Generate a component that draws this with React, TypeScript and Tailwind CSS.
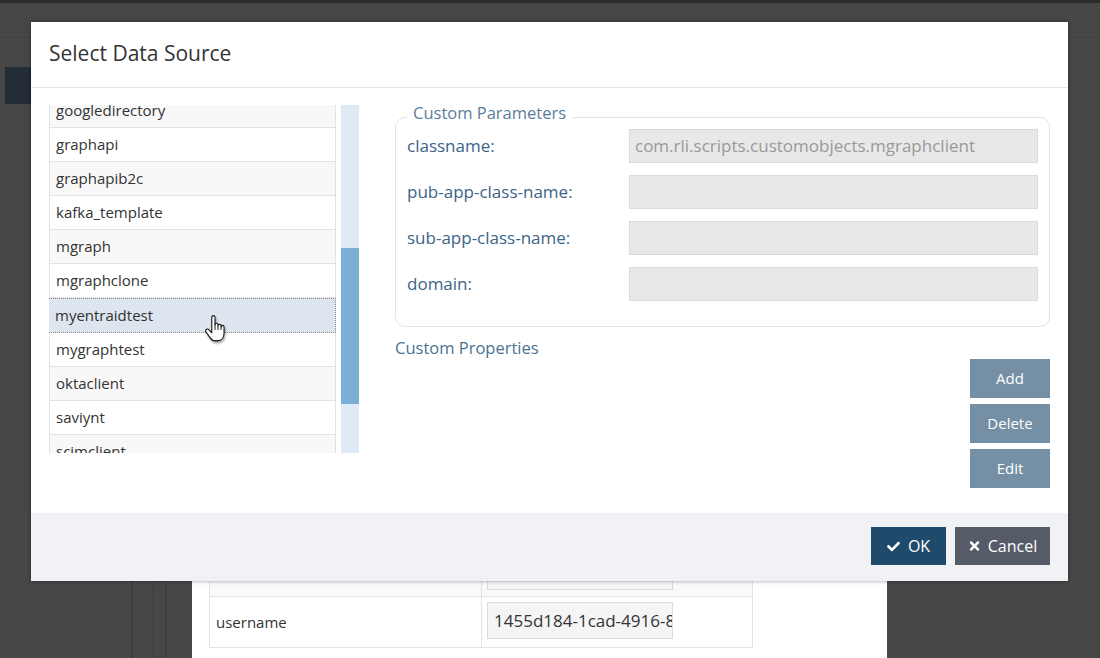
import React from "react";
import { FaCheck, FaTimes } from "react-icons/fa";

const items = [
  "googledirectory",
  "graphapi",
  "graphapib2c",
  "kafka_template",
  "mgraph",
  "mgraphclone",
  "myentraidtest",
  "mygraphtest",
  "oktaclient",
  "saviynt",
  "scimclient",
];

const params: { label: string; value: string }[] = [
  { label: "classname:", value: "com.rli.scripts.customobjects.mgraphclient" },
  { label: "pub-app-class-name:", value: "" },
  { label: "sub-app-class-name:", value: "" },
  { label: "domain:", value: "" },
];

function HandCursor() {
  return (
    <svg width="22" height="28" viewBox="0 0 20 26" className="drop-shadow-[1px_2px_1px_rgba(0,0,0,0.35)]">
      <path
        d="M7 2.2C7 1.3 7.6 0.6 8.5 0.6C9.4 0.6 10 1.3 10 2.2V9C10 8.2 10.6 7.6 11.4 7.6C12.2 7.6 12.8 8.2 12.8 9V10C12.8 9.2 13.4 8.6 14.2 8.6C15 8.6 15.6 9.2 15.6 10V11C15.6 10.2 16.2 9.6 17 9.6C17.8 9.6 18.4 10.2 18.4 11V17C18.4 21 16 24 12 24H10.5C8 24 6.8 23 5.5 21.2L1.6 15.6C1 14.8 1.2 13.8 2 13.3C2.8 12.8 3.8 13 4.4 13.8L7 16.5Z"
        fill="#ffffff"
        stroke="#111111"
        strokeWidth="1"
        strokeLinejoin="round"
      />
      <path d="M10 9V13.5M12.8 10V13.5M15.6 11V13.5" stroke="#111111" strokeWidth="0.9" strokeLinecap="round" fill="none" />
    </svg>
  );
}

export default function App() {
  return (
    <div
      className="relative w-[1100px] h-[658px] overflow-hidden bg-[#474747] flex flex-col"
      style={{ fontFamily: '"Open Sans", "Noto Sans", sans-serif' }}
    >
      {/* background page */}
      <div className="h-[3px] bg-[#2b2b2b] shrink-0" />
      <div className="h-[35px] border-b border-[#3f3f3f] shrink-0" />
      <div className="h-[29px] shrink-0" />
      <div className="ml-[5px] w-[40px] h-[37px] bg-[#222d38] shrink-0" />
      <div className="flex-1" />
      <div className="flex h-[77px] shrink-0">
        <div className="w-[192px] flex">
          <div className="w-[131px]" />
          <div className="w-[2px] bg-[#3e3e3e]" />
          <div className="w-[19px]" />
          <div className="w-[2px] bg-[#424242]" />
          <div className="w-[11px]" />
          <div className="w-[2px] bg-[#3f3f3f]" />
        </div>
        <div className="w-[695px] bg-white flex flex-col justify-end px-[17px] pb-[10px] overflow-hidden">
          <div className="w-[544px] border border-[#e3e3e3] shrink-0">
            <div className="flex h-[50px] bg-[#f9f9f9] border-b border-[#e3e3e3]">
              <div className="w-[272px] border-r border-[#e3e3e3]" />
              <div className="flex-1 pl-[5px] pt-[6px]">
                <div className="w-[186px] h-[37px] border border-[#dcdcdc] bg-[#f5f5f5]" />
              </div>
            </div>
            <div className="flex h-[50px] bg-white">
              <div className="w-[272px] border-r border-[#e3e3e3] flex items-center pl-[6px] text-[15px] text-[#333]">
                username
              </div>
              <div className="flex-1 pl-[5px] pt-[5px]">
                <div className="w-[186px] h-[37px] border border-[#dcdcdc] bg-[#f5f5f5] flex items-center pl-[6px] overflow-hidden whitespace-nowrap text-[17px] text-[#333]">
                  1455d184-1cad-4916-8
                </div>
              </div>
            </div>
          </div>
        </div>
      </div>

      {/* modal */}
      <div className="absolute left-[31px] top-[22px] w-[1037px] h-[559px] bg-white flex flex-col shadow-[0_0_4px_rgba(0,0,0,0.4)]">
        <div className="h-[66px] shrink-0 border-b border-[#e5e5e5] flex items-center pl-[18px] pb-[2px]">
          <span className="text-[21px] text-[#333]">Select Data Source</span>
        </div>
        <div className="flex-1 flex pl-[18px] pr-[18px] pt-[17px]">
          {/* list */}
          <div className="flex items-start">
            <div className="w-[287px] h-[348px] overflow-hidden">
              <div className="-mt-[11px]">
                {items.map((it, i) => {
                  const sel = it === "myentraidtest";
                  return (
                    <div
                      key={it}
                      className={
                        sel
                          ? "relative h-[35px] bg-[#dde6ef] border border-dotted border-[#8a8a8a] flex items-center pl-[6px] text-[15px] text-[#333] -ml-[1px] w-[288px]"
                          : i % 2 === 0
                          ? "h-[34px] bg-[#f8f8f8] border-x border-b border-[#e2e2e2] flex items-center pl-[6px] text-[15px] text-[#333]"
                          : "h-[34px] bg-white border-x border-b border-[#e2e2e2] flex items-center pl-[6px] text-[15px] text-[#333]"
                      }
                    >
                      {it}
                      {sel && (
                        <div className="absolute left-[155px] top-[16px]">
                          <HandCursor />
                        </div>
                      )}
                    </div>
                  );
                })}
              </div>
            </div>
            <div className="ml-[5px] w-[18px] h-[348px] bg-[#deebf6] flex flex-col">
              <div className="h-[143px]" />
              <div className="h-[156px] bg-[#7bafd5]" />
            </div>
          </div>

          {/* right side */}
          <div className="flex-1 ml-[36px] flex flex-col">
            <fieldset className="border border-[#e4e4e4] rounded-[10px] pl-[11px] pr-[11px] pb-[25px]">
              <legend className="ml-0 px-[6px] pb-[8px] text-[16.5px] text-[#5a7d9a] leading-[16px]">
                Custom Parameters
              </legend>
              <div className="flex flex-col gap-[12px]">
                {params.map((p) => (
                  <div key={p.label} className="flex items-center h-[34px]">
                    <div className="w-[222px] text-[17px] text-[#3b6487]">{p.label}</div>
                    <div className="flex-1 h-[34px] bg-[#e8e8e8] border border-[#dadada] flex items-center pl-[5px] text-[17px] text-[#999] whitespace-nowrap overflow-hidden">
                      {p.value}
                    </div>
                  </div>
                ))}
              </div>
            </fieldset>
            <div className="mt-[9px] text-[16.5px] text-[#4a7192] leading-[24px]">Custom Properties</div>
            <div className="flex justify-end">
              <div className="flex flex-col gap-[6px] -mt-[1px]">
                {["Add", "Delete", "Edit"].map((b) => (
                  <div
                    key={b}
                    className="w-[80px] h-[39px] bg-[#7590a5] text-white text-[15px] flex items-center justify-center"
                  >
                    {b}
                  </div>
                ))}
              </div>
            </div>
          </div>
        </div>
        <div className="h-[68px] shrink-0 bg-[#f0f2f6] flex items-start justify-end pr-[18px] pt-[14px] gap-[9px]">
          <div className="w-[75px] h-[38px] bg-[#1e4a6c] text-white text-[16px] flex items-center justify-center gap-[8px]">
            <FaCheck className="w-[13px] h-[13px]" />
            <span>OK</span>
          </div>
          <div className="w-[95px] h-[38px] bg-[#565b68] text-white text-[16px] flex items-center justify-center gap-[7px]">
            <FaTimes className="w-[13px] h-[14px]" />
            <span>Cancel</span>
          </div>
        </div>
      </div>
    </div>
  );
}
